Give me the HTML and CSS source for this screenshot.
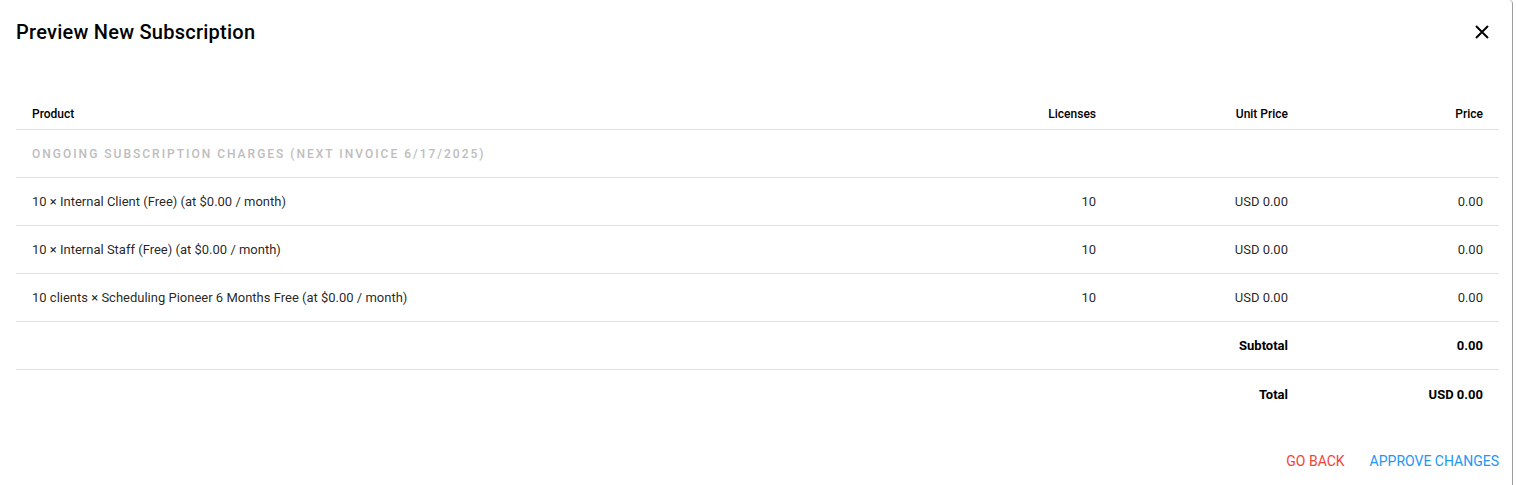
FILE: index.html
```html
<!DOCTYPE html>
<html>
<head>
<meta charset="utf-8">
<link rel="stylesheet" href="styles.css">
</head>
<body>
<div class="dialog">
  <div class="header">
    <h1 class="title">Preview New Subscription</h1>
    <button class="close" aria-label="Close">
      <svg width="14" height="14" viewBox="0 0 14 14"><path d="M1 1L13 13M13 1L1 13" stroke="#000" stroke-width="2" fill="none"/></svg>
    </button>
  </div>
  <div class="content">
    <table class="tbl">
      <colgroup>
        <col>
        <col class="c-lic">
        <col class="c-unit">
        <col class="c-price">
      </colgroup>
      <thead>
        <tr class="head-row">
          <th class="l">Product</th>
          <th class="r">Licenses</th>
          <th class="r">Unit Price</th>
          <th class="r">Price</th>
        </tr>
      </thead>
      <tbody>
        <tr class="row section">
          <td colspan="4">Ongoing subscription charges (next invoice 6/17/2025)</td>
        </tr>
        <tr class="row">
          <td>10 × Internal Client (Free) (at $0.00 / month)</td>
          <td class="r">10</td>
          <td class="r">USD 0.00</td>
          <td class="r">0.00</td>
        </tr>
        <tr class="row">
          <td>10 × Internal Staff (Free) (at $0.00 / month)</td>
          <td class="r">10</td>
          <td class="r">USD 0.00</td>
          <td class="r">0.00</td>
        </tr>
        <tr class="row">
          <td>10 clients × Scheduling Pioneer 6 Months Free (at $0.00 / month)</td>
          <td class="r">10</td>
          <td class="r">USD 0.00</td>
          <td class="r">0.00</td>
        </tr>
        <tr class="row sum">
          <td></td>
          <td></td>
          <td class="r">Subtotal</td>
          <td class="r">0.00</td>
        </tr>
        <tr class="row sum last">
          <td></td>
          <td></td>
          <td class="r">Total</td>
          <td class="r">USD 0.00</td>
        </tr>
      </tbody>
    </table>
  </div>
  <div class="actions">
    <button class="btn back">Go back</button>
    <button class="btn approve">Approve changes</button>
  </div>
</div>
</body>
</html>
```

FILE: styles.css
```css
html, body {
  margin: 0;
  padding: 0;
  height: 100%;
}
body {
  background: #ffffff;
  font-family: Roboto, "Liberation Sans", Arial, sans-serif;
  color: rgba(0, 0, 0, 0.87);
}
.dialog {
  width: 1513px;
  height: 485px;
  box-sizing: border-box;
  border-right: 1px solid #9e9e9e;
  border-radius: 0 4px 0 0;
  background: #fff;
  display: flex;
  flex-direction: column;
}
.header {
  display: flex;
  align-items: center;
  justify-content: space-between;
  height: 64px;
  padding: 0 16px 0 16px;
}
.title {
  margin: 0;
  font-size: 20px;
  font-weight: 500;
  color: #000;
  letter-spacing: 0.25px;
}
.close {
  border: 0;
  background: transparent;
  padding: 0;
  width: 24px;
  height: 24px;
  display: flex;
  align-items: center;
  justify-content: center;
  cursor: pointer;
  margin-right: 2px;
}
.content {
  padding: 34px 0 0 16px;
  width: 1483px;
}
.tbl {
  width: 100%;
  border-collapse: collapse;
  table-layout: fixed;
}
.c-lic { width: 192px; }
.c-unit { width: 192px; }
.c-price { width: 195px; }
.tbl th, .tbl td {
  padding: 0 16px;
  font-size: 13px;
  white-space: nowrap;
}
.head-row th {
  height: 31px;
  font-size: 12px;
  font-weight: 500;
  color: #000;
  border-bottom: 1px solid #e0e0e0;
  vertical-align: middle;
}
.l { text-align: left; }
.r { text-align: right; }
.row td {
  height: 47px;
  border-bottom: 1px solid #e0e0e0;
  color: rgba(0, 0, 0, 0.87);
}
.section td {
  font-size: 12px;
  font-weight: 500;
  letter-spacing: 2px;
  text-transform: uppercase;
  color: #bdbdbd;
}
.sum td {
  font-weight: 700;
  color: #000;
}
.last td {
  border-bottom: 0;
  height: 49px;
}
.actions {
  display: flex;
  justify-content: flex-end;
  gap: 25px;
  padding: 32px 13px 0 0;
}
.btn {
  border: 0;
  background: transparent;
  padding: 0;
  font-family: Roboto, "Liberation Sans", Arial, sans-serif;
  font-size: 14px;
  font-weight: 400;
  text-transform: uppercase;
  cursor: pointer;
  line-height: 20px;
}
.back { color: #f44336; }
.approve { color: #2196f3; }
```
